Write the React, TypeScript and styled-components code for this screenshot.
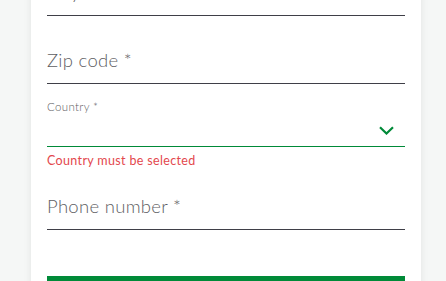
import React from "react";
import styled, { createGlobalStyle } from "styled-components";

const Global = createGlobalStyle`
  html, body { margin: 0; padding: 0; background: #f5f7f6; overflow: hidden; }
  body { font-family: "Lato", "Open Sans", sans-serif; }
`;

const Page = styled.div`
  width: 446px;
  height: 281px;
  overflow: hidden;
`;

const Card = styled.form`
  margin: -32px 0 0 31px;
  width: 390px;
  box-sizing: border-box;
  padding: 0 16px 40px;
  background: #ffffff;
  box-shadow: 0 0 8px rgba(0, 0, 0, 0.08);
  display: flex;
  flex-direction: column;
`;

const TextField = styled.div<{ $gap: number }>`
  margin-top: ${(p) => p.$gap}px;
  height: 48px;
  box-sizing: border-box;
  display: flex;
  align-items: flex-end;
  padding-bottom: 12px;
  border-bottom: 1px solid #3f3f47;
  font-size: 18.5px;
  font-weight: 300;
  letter-spacing: 0.3px;
  line-height: 22px;
  color: #5e5e63;
`;

const SelectField = styled.div`
  margin-top: 16px;
  display: flex;
  flex-direction: column;
  border-bottom: 1px solid #008a38;
`;

const SmallLabel = styled.span`
  font-size: 11.5px;
  font-weight: 300;
  letter-spacing: 0.35px;
  line-height: 14px;
  color: #5e5e63;
`;

const SelectBox = styled.div`
  height: 32px;
  display: flex;
  align-items: center;
  justify-content: flex-end;
  padding-right: 11px;
`;

const ErrorText = styled.div`
  margin-top: 6px;
  font-size: 12.5px;
  font-weight: 400;
  letter-spacing: 0.35px;
  line-height: 16px;
  color: #e3484d;
`;

const SubmitButton = styled.button`
  margin-top: 46px;
  height: 48px;
  border: none;
  background: #008a38;
  color: #fff;
`;

const Chevron = () => (
  <svg width="15" height="9" viewBox="0 0 15 9" fill="none">
    <path d="M1 1.2 L7.5 7.5 L14 1.2" stroke="#008a38" strokeWidth="2.2" />
  </svg>
);

export default function App() {
  return (
    <Page>
      <Global />
      <Card>
        <TextField $gap={0}>City *</TextField>
        <TextField $gap={20}>Zip code *</TextField>
        <SelectField>
          <SmallLabel>Country *</SmallLabel>
          <SelectBox>
            <Chevron />
          </SelectBox>
        </SelectField>
        <ErrorText>Country must be selected</ErrorText>
        <TextField $gap={13}>Phone number *</TextField>
        <SubmitButton type="button" />
      </Card>
    </Page>
  );
}
